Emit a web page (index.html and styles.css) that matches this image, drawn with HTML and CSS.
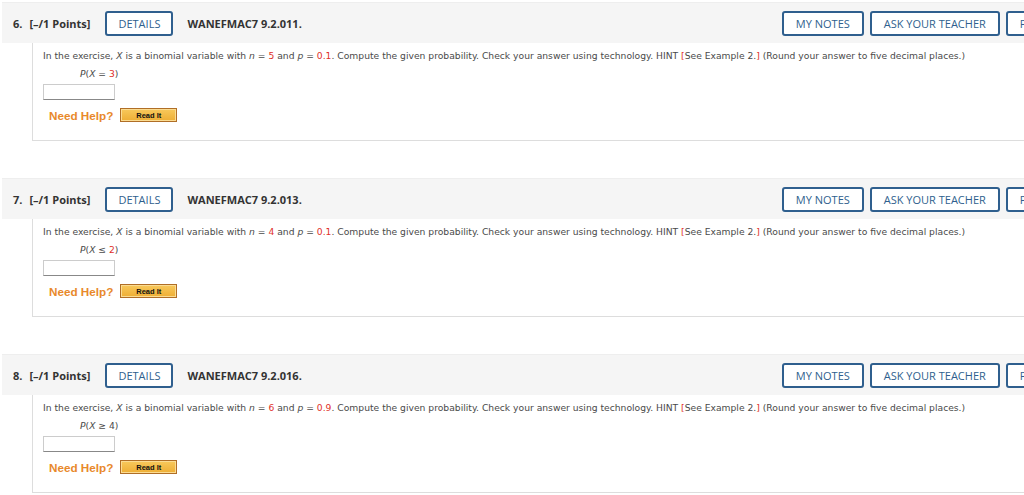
FILE: index.html
```html
<!DOCTYPE html>
<html lang="en">
<head>
    <meta charset="UTF-8">
    <title>Assignment</title>
    <link rel="stylesheet" href="styles.css">
</head>
<body>
    <div class="page">
        <div class="question">
            <div class="q-head">
                <span class="q-num">6.</span>
                <span class="q-points">[&ndash;/1 Points]</span>
                <button class="btn">DETAILS</button>
                <span class="q-code">WANEFMAC7 9.2.011.</span>
                <div class="q-actions">
                    <button class="btn">MY NOTES</button>
                    <button class="btn">ASK YOUR TEACHER</button>
                    <button class="btn">PRACTICE ANOTHER</button>
                </div>
            </div>
            <div class="q-body">
                <div class="q-text">In the exercise, <i>X</i> is a binomial variable with <i>n</i> = <span class="red">5</span> and <i>p</i> = <span class="red">0.1</span>. Compute the given probability. Check your answer using technology. HINT <span class="red">[</span>See Example 2.<span class="red">]</span> (Round your answer to five decimal places.)</div>
                <div class="q-prob"><i>P</i>(<i>X</i> = <span class="red">3</span>)</div>
                <input class="answer" type="text">
                <div class="help">
                    <span class="need">Need Help?</span>
                    <button class="read-it">Read It</button>
                </div>
            </div>
        </div>

        <div class="question">
            <div class="q-head">
                <span class="q-num">7.</span>
                <span class="q-points">[&ndash;/1 Points]</span>
                <button class="btn">DETAILS</button>
                <span class="q-code">WANEFMAC7 9.2.013.</span>
                <div class="q-actions">
                    <button class="btn">MY NOTES</button>
                    <button class="btn">ASK YOUR TEACHER</button>
                    <button class="btn">PRACTICE ANOTHER</button>
                </div>
            </div>
            <div class="q-body">
                <div class="q-text">In the exercise, <i>X</i> is a binomial variable with <i>n</i> = <span class="red">4</span> and <i>p</i> = <span class="red">0.1</span>. Compute the given probability. Check your answer using technology. HINT <span class="red">[</span>See Example 2.<span class="red">]</span> (Round your answer to five decimal places.)</div>
                <div class="q-prob"><i>P</i>(<i>X</i> &le; <span class="red">2</span>)</div>
                <input class="answer" type="text">
                <div class="help">
                    <span class="need">Need Help?</span>
                    <button class="read-it">Read It</button>
                </div>
            </div>
        </div>

        <div class="question">
            <div class="q-head">
                <span class="q-num">8.</span>
                <span class="q-points">[&ndash;/1 Points]</span>
                <button class="btn">DETAILS</button>
                <span class="q-code">WANEFMAC7 9.2.016.</span>
                <div class="q-actions">
                    <button class="btn">MY NOTES</button>
                    <button class="btn">ASK YOUR TEACHER</button>
                    <button class="btn">PRACTICE ANOTHER</button>
                </div>
            </div>
            <div class="q-body">
                <div class="q-text">In the exercise, <i>X</i> is a binomial variable with <i>n</i> = <span class="red">6</span> and <i>p</i> = <span class="red">0.9</span>. Compute the given probability. Check your answer using technology. HINT <span class="red">[</span>See Example 2.<span class="red">]</span> (Round your answer to five decimal places.)</div>
                <div class="q-prob"><i>P</i>(<i>X</i> &ge; 4)</div>
                <input class="answer" type="text">
                <div class="help">
                    <span class="need">Need Help?</span>
                    <button class="read-it">Read It</button>
                </div>
            </div>
        </div>
    </div>
</body>
</html>
```

FILE: styles.css
```css
body {
    margin: 0;
    padding: 0;
    background: #fff;
    overflow: hidden;
    font-family: "Open Sans", sans-serif;
    color: #333;
}
.page {
    width: 1145px;
    padding: 2px 0 0 2px;
}
.question {
    margin-bottom: 37px;
}
.q-head {
    display: flex;
    align-items: center;
    height: 40px;
    padding: 0 10px 0 11px;
    background: #f5f5f5;
    border-top: 1px solid #eeeeee;
}
.q-num {
    font-size: 11px;
    font-weight: 700;
    margin-right: 7px;
}
.q-points {
    font-size: 11px;
    font-weight: 700;
    margin-right: 15px;
}
.q-code {
    font-size: 11px;
    font-weight: 700;
    margin-left: 14px;
}
.q-actions {
    display: flex;
    gap: 6px;
    margin-left: auto;
}
.btn {
    height: 25px;
    padding: 0 11px;
    background: #fff;
    border: 2px solid #2f5f8e;
    border-radius: 3px;
    color: #2f5f8e;
    font-family: "Open Sans", sans-serif;
    font-size: 11px;
    cursor: pointer;
}
.q-actions .btn {
    padding: 0 12px;
    font-weight: 500;
}
.q-body {
    margin-left: 30px;
    padding: 6px 10px 17px;
    border-left: 1px solid #dddddd;
    border-bottom: 1px solid #dddddd;
    font-family: "DejaVu Sans", Verdana, sans-serif;
    font-size: 9.2px;
    color: #4a4a4a;
}
.q-text {
    line-height: 13px;
    white-space: nowrap;
}
.q-prob {
    line-height: 13px;
    margin: 5px 0 0 37px;
}
.red {
    color: #e0302a;
}
.answer {
    display: block;
    box-sizing: border-box;
    width: 72px;
    height: 16px;
    margin-top: 4px;
    padding: 0;
    border: 1px solid #cccccc;
    border-bottom-color: #888888;
}
.help {
    display: flex;
    align-items: center;
    height: 16px;
    margin-top: 7px;
    padding-left: 6px;
}
.need {
    font-family: "Liberation Sans", Arial, sans-serif;
    font-size: 11.7px;
    font-weight: 700;
    color: #e8892b;
    margin-right: 7px;
}
.read-it {
    width: 57px;
    height: 14px;
    padding: 0;
    background: linear-gradient(#f8c95c, #eeae35);
    border: 1px solid #b06e26;
    box-shadow: inset 0 0 0 1px #fbdc92;
    font-family: "Liberation Sans", Arial, sans-serif;
    font-size: 7.5px;
    font-weight: 700;
    color: #111;
    cursor: pointer;
}
```
